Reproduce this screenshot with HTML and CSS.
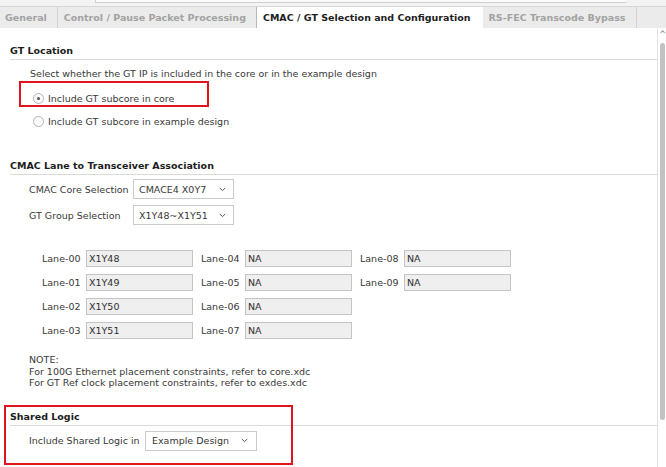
FILE: index.html
```html
<!DOCTYPE html>
<html>
<head>
<meta charset="utf-8">
<link rel="stylesheet" href="styles.css">
</head>
<body>
<div class="topstrip"><div class="topbox"></div></div>
<div class="tabs">
  <div class="tab first">General</div>
  <div class="tab">Control / Pause Packet Processing</div>
  <div class="tab active">CMAC / GT Selection and Configuration</div>
  <div class="tab">RS-FEC Transcode Bypass</div>
</div>
<div class="main">
  <div class="content">
    <div class="section">
      <div class="title">GT Location</div>
      <div class="desc">Select whether the GT IP is included in the core or in the example design</div>
      <div class="radio-row r1"><span class="radio checked"></span><span>Include GT subcore in core</span></div>
      <div class="radio-row r2"><span class="radio"></span><span>Include GT subcore in example design</span></div>
      <div class="mark mark1"></div>
    </div>

    <div class="section">
      <div class="title t2">CMAC Lane to Transceiver Association</div>
      <div class="form-row f1">
        <span class="flabel">CMAC Core Selection</span>
        <div class="select s1"><span>CMACE4 X0Y7</span><svg class="chev" width="7" height="5" viewBox="0 0 7 5"><polyline points="0.8,1 3.5,3.6 6.2,1" fill="none" stroke="#555" stroke-width="1"/></svg></div>
      </div>
      <div class="form-row f2">
        <span class="flabel">GT Group Selection</span>
        <div class="select s1"><span>X1Y48~X1Y51</span><svg class="chev" width="7" height="5" viewBox="0 0 7 5"><polyline points="0.8,1 3.5,3.6 6.2,1" fill="none" stroke="#555" stroke-width="1"/></svg></div>
      </div>

      <div class="lanes">
        <div class="lane"><span class="llabel">Lane-00</span><div class="field">X1Y48</div></div>
        <div class="lane"><span class="llabel">Lane-04</span><div class="field">NA</div></div>
        <div class="lane"><span class="llabel">Lane-08</span><div class="field">NA</div></div>
        <div class="lane"><span class="llabel">Lane-01</span><div class="field">X1Y49</div></div>
        <div class="lane"><span class="llabel">Lane-05</span><div class="field">NA</div></div>
        <div class="lane"><span class="llabel">Lane-09</span><div class="field">NA</div></div>
        <div class="lane"><span class="llabel">Lane-02</span><div class="field">X1Y50</div></div>
        <div class="lane"><span class="llabel">Lane-06</span><div class="field">NA</div></div>
        <div class="lane empty"></div>
        <div class="lane"><span class="llabel">Lane-03</span><div class="field">X1Y51</div></div>
        <div class="lane"><span class="llabel">Lane-07</span><div class="field">NA</div></div>
        <div class="lane empty"></div>
      </div>

      <div class="note">
        <div>NOTE:</div>
        <div>For 100G Ethernet placement constraints, refer to core.xdc</div>
        <div>For GT Ref clock placement constraints, refer to exdes.xdc</div>
      </div>
    </div>

    <div class="section">
      <div class="title t3">Shared Logic</div>
      <div class="form-row f3">
        <span class="flabel">Include Shared Logic in</span>
        <div class="select s3"><span>Example Design</span><svg class="chev" width="7" height="5" viewBox="0 0 7 5"><polyline points="0.8,1 3.5,3.6 6.2,1" fill="none" stroke="#555" stroke-width="1"/></svg></div>
      </div>
      <div class="mark mark2"></div>
    </div>
  </div>
  <div class="scrollbar">
    <div class="arrow">^</div>
    <div class="thumb"></div>
  </div>
</div>
</body>
</html>
```

FILE: styles.css
```css
html, body {
  margin: 0;
  padding: 0;
  background: #ffffff;
}
body {
  width: 666px;
  height: 467px;
  overflow: hidden;
  font-family: "DejaVu Sans", Verdana, sans-serif;
  font-size: 9.5px;
  color: #383838;
}
.topstrip {
  height: 6px;
  background: #f3f3f3;
  border-bottom: 1px solid #d6d6d6;
}
.topbox {
  margin-left: 95px;
  width: 530px;
  height: 2px;
  border-left: 1px solid #cfcfcf;
  border-bottom: 1px solid #cfcfcf;
  background: #fafafa;
}
.tabs {
  display: flex;
  height: 21px;
  background: #ebebeb;
}
.tab {
  display: flex;
  align-items: center;
  padding: 0 10px 0 6px;
  font-weight: bold;
  color: #a2a2a2;
  border-right: 1px solid #d2d2d2;
  white-space: nowrap;
}
.tab.first {
  padding-left: 5px;
}
.tab.active {
  background: #ffffff;
  color: #1e1e1e;
  border-left: 1px solid #b8b8b8;
  border-right: none;
  margin-left: -1px;
  padding: 0 12px 0 6px;
}
.main {
  display: flex;
  height: 439px;
}
.content {
  flex: 1;
  padding-left: 10px;
}
.section {
  position: relative;
}
.title {
  margin-top: 17px;
  line-height: 12px;
  padding-bottom: 2px;
  border-bottom: 1px solid #dadada;
  font-weight: bold;
  color: #1c1c1c;
}
.t2 { margin-top: 31px; }
.t3 { margin-top: 22px; }
.desc {
  margin-top: 8px;
  margin-left: 20px;
  line-height: 12px;
}
.radio-row {
  display: flex;
  align-items: center;
  gap: 4px;
  height: 16px;
  margin-left: 23px;
}
.r1 { margin-top: 10px; }
.r2 { margin-top: 7px; }
.radio {
  width: 9px;
  height: 9px;
  border: 1px solid #b5b5b5;
  border-radius: 50%;
  background: #fbfbfb;
  display: flex;
  align-items: center;
  justify-content: center;
  box-sizing: content-box;
}
.radio.checked::after {
  content: "";
  width: 3px;
  height: 3px;
  border-radius: 50%;
  background: #555;
}
.mark {
  position: absolute;
  border: 2px solid #e0141c;
  box-sizing: border-box;
}
.mark1 {
  left: 9px;
  top: 36px;
  width: 190px;
  height: 26px;
}
.mark2 {
  left: -6px;
  top: -6px;
  width: 289px;
  height: 60px;
}
.form-row {
  display: flex;
  align-items: center;
  margin-left: 19px;
}
.f1 { margin-top: 4px; }
.f2 { margin-top: 6px; }
.f3 { margin-top: 5px; }
.f1 .flabel, .f2 .flabel { width: 104px; }
.f3 .flabel { width: 116px; }
.select {
  height: 20px;
  box-sizing: border-box;
  border: 1px solid #cacaca;
  background: #ffffff;
  display: flex;
  align-items: center;
  justify-content: space-between;
  padding: 0 7px 0 5px;
}
.s1 { width: 101px; }
.s3 { width: 112px; padding-left: 6px; padding-right: 8px; }
.chev { display: block; }
.lanes {
  margin-top: 25px;
  margin-left: 32px;
  display: grid;
  grid-template-columns: repeat(3, 151px);
  column-gap: 8px;
  row-gap: 7px;
}
.lane {
  display: flex;
  align-items: center;
  height: 17px;
}
.llabel {
  width: 44px;
}
.field {
  width: 107px;
  height: 17px;
  box-sizing: border-box;
  border: 1px solid #c4c4c4;
  background: #efefef;
  padding-left: 2px;
  line-height: 15px;
  color: #2e2e2e;
}
.note {
  margin-top: 15px;
  margin-left: 19px;
  line-height: 11.5px;
}
.scrollbar {
  width: 8px;
  border-left: 1px solid #e2e2e2;
}
.arrow {
  font-size: 8px;
  line-height: 8px;
  color: #777;
  text-align: center;
  margin-top: 3px;
  margin-left: 1px;
}
.thumb {
  margin: 4px 1px 0 2px;
  height: 377px;
  background: #c2c2c2;
  border-radius: 3px;
}
```
